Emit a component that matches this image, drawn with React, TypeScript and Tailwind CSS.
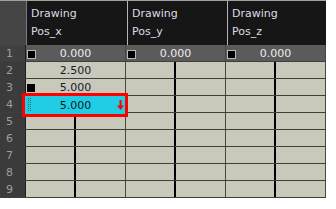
import React from 'react';

type Cell = { value?: string; key?: 'open' | 'filled' };

const rows: Cell[][] = [
    [{ value: '0.000', key: 'open' }, { value: '0.000', key: 'open' }, { value: '0.000', key: 'open' }],
    [{ value: '2.500' }, {}, {}],
    [{ value: '5.000', key: 'filled' }, {}, {}],
    [{ value: '5.000' }, {}, {}],
    [{}, {}, {}],
    [{}, {}, {}],
    [{}, {}, {}],
    [{}, {}, {}],
    [{}, {}, {}],
];

const headers = [
    { top: 'Drawing', bottom: 'Pos_x', width: 'w-[101px] border-r border-[#b4b4b4]' },
    { top: 'Drawing', bottom: 'Pos_y', width: 'w-[100px] border-r border-[#b4b4b4]' },
    { top: 'Drawing', bottom: 'Pos_z', width: 'w-[98px]' },
];

const Grip = () => (
    <svg width="3" height="14" viewBox="0 0 3 14" className="block">
        {[0, 2, 4, 6, 8, 10, 12].map(y => (
            <g key={y} fill="#24687c">
                <rect x="0" y={y} width="1" height="1" />
                <rect x="2" y={y} width="1" height="1" />
            </g>
        ))}
    </svg>
);

const DownArrow = () => (
    <svg width="7" height="10" viewBox="0 0 7 10" className="block">
        <rect x="2.5" y="0" width="2" height="8" fill="#ff0000" />
        <path d="M0 5.5 L7 5.5 L3.5 10 Z" fill="#ff0000" />
    </svg>
);

const DataCell: React.FC<{ cell: Cell; first: boolean }> = ({ cell, first }) => {
    const bg = first ? 'bg-[#5b5b5b]' : 'bg-[#c8c8bb]';
    return (
        <div className={`relative w-[100px] h-full border-r border-[#464646] ${bg} flex items-center justify-center`}>
            {cell.key === 'open' && (
                <div className="absolute left-[1px] top-[5px] w-[9px] h-[9px] bg-black border border-[#b8b8b8]" />
            )}
            {cell.key === 'filled' && (
                <div className="absolute left-[1px] top-[5px] w-[8px] h-[8px] bg-black" />
            )}
            {cell.value ? (
                <span className={`pt-[1px] ${first ? 'text-[#ececec]' : 'text-[#1a1a30]'}`}>{cell.value}</span>
            ) : (
                <div className="flex w-full h-full">
                    <div className="w-[48px]" />
                    <div className="w-[2px] h-full bg-black" />
                </div>
            )}
        </div>
    );
};

export default function App() {
    return (
        <div className="w-[336px] h-[209px] bg-white font-['DejaVu_Sans',sans-serif] text-[11px] leading-[16px]">
            <div className="w-[326px]">
                <div className="flex h-[45px] bg-[#161616] border-t border-[#a0a0a0]">
                    <div className="w-[27px] h-full bg-[#454545] border-r border-[#7a7a7a]" />
                    {headers.map(h => (
                        <div key={h.bottom} className={`${h.width} h-full pl-[4px] pt-[4px] leading-[18px] text-[#dcdce4]`}>
                            <div>{h.top}</div>
                            <div>{h.bottom}</div>
                        </div>
                    ))}
                </div>
                {rows.map((row, i) => (
                    <div key={i} className="flex h-[17px] border-b border-[#3e3e3e]">
                        <div className={`w-[26px] h-full border-r border-[#1e1e1e] pl-[6px] pt-[1px] text-[#9e9e9e] ${i === 0 ? 'bg-[#404040]' : 'bg-[#3b3b3b]'}`}>
                            {i + 1}
                        </div>
                        {row.map((cell, j) =>
                            i === 3 && j === 0 ? (
                                <div key={j} className="relative w-[100px] h-full border-r border-[#464646] bg-[#c8c8bb]">
                                    <div className="absolute -left-[4px] -top-[3px] w-[106px] h-[24px] z-10 border-[3px] border-[#ff0000] bg-[#20cde4] flex items-center justify-between pl-[3px] pr-[1px]">
                                        <Grip />
                                        <span className="pt-[1px] pl-[3px] text-[#101828]">{cell.value}</span>
                                        <DownArrow />
                                    </div>
                                </div>
                            ) : (
                                <DataCell key={j} cell={cell} first={i === 0} />
                            )
                        )}
                    </div>
                ))}
            </div>
        </div>
    );
}
